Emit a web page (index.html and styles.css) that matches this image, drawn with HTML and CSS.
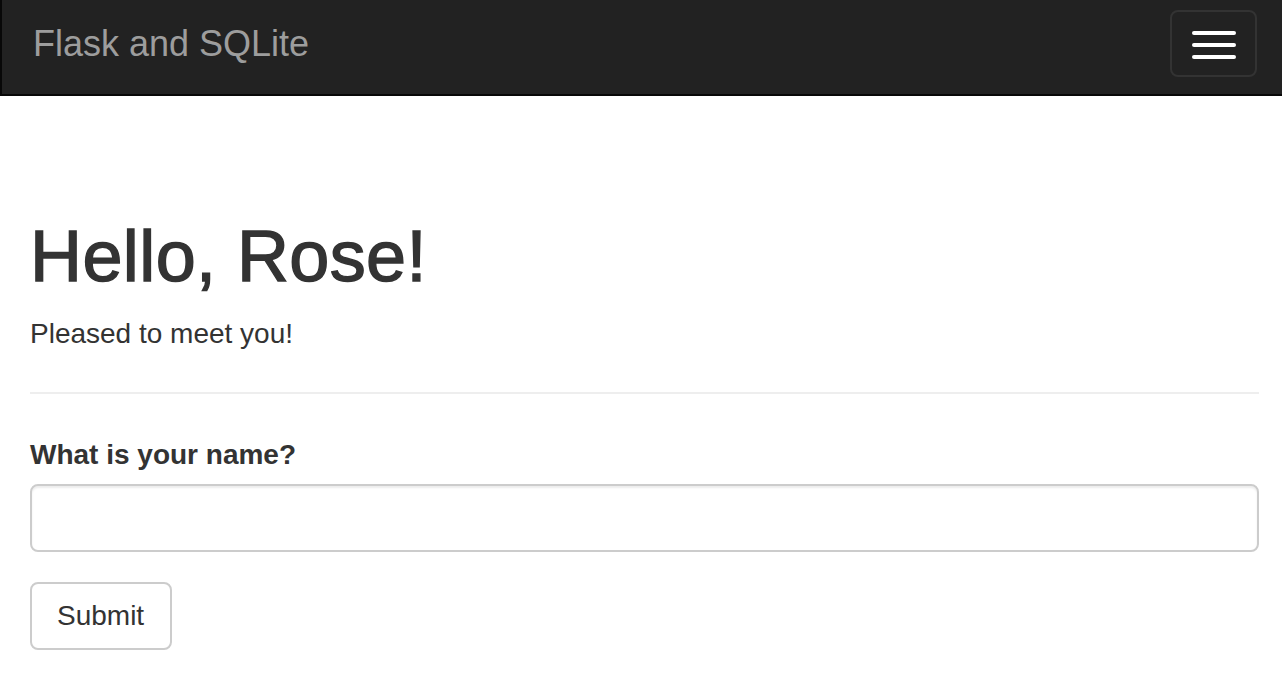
FILE: index.html
```html
<!DOCTYPE html>
<html lang="en">
<head>
    <meta charset="UTF-8">
    <meta name="viewport" content="width=device-width, initial-scale=1.0">
    <title>Flask and SQLite</title>
    <link rel="stylesheet" href="styles.css">
</head>
<body>

    <nav class="navbar">
        <a class="navbar-brand" href="#">Flask and SQLite</a>
        <button class="navbar-toggle" type="button">
            <span class="icon-bar"></span>
            <span class="icon-bar"></span>
            <span class="icon-bar"></span>
        </button>
    </nav>

    <div class="container">
        <div class="page-header">
            <h1>Hello, Rose!</h1>
            <p>Pleased to meet you!</p>
        </div>

        <form class="form">
            <div class="form-group">
                <label for="name">What is your name?</label>
                <input type="text" id="name" class="form-control">
            </div>
            <button type="submit" class="btn">Submit</button>
        </form>
    </div>

</body>
</html>
```

FILE: styles.css
```css
* {
    margin: 0;
    padding: 0;
    box-sizing: border-box;
}
body {
    font-family: 'Liberation Sans', Arial, sans-serif;
    font-size: 28px;
    line-height: 40px;
    color: #333;
    background: #fff;
}
.navbar {
    display: flex;
    justify-content: space-between;
    align-items: flex-start;
    height: 96px;
    background-color: #222;
    border-left: 2px solid #080808;
    border-bottom: 2px solid #080808;
    padding: 0 25px 0 31px;
}
.navbar-brand {
    color: #9d9d9d;
    font-size: 36px;
    line-height: 40px;
    text-decoration: none;
    padding-top: 24px;
}
.navbar-toggle {
    display: flex;
    flex-direction: column;
    gap: 8px;
    margin-top: 10px;
    width: 87px;
    height: 67px;
    padding: 19px 19px 0 20px;
    background: transparent;
    border: 2px solid #333;
    border-radius: 8px;
    cursor: pointer;
}
.icon-bar {
    display: block;
    width: 44px;
    height: 4px;
    background-color: #fff;
    border-radius: 2px;
}
.container {
    padding: 121px 23px 0 30px;
}
h1 {
    font-size: 72px;
    font-weight: 500;
    line-height: 1.1;
    letter-spacing: 0.4px;
    -webkit-text-stroke: 1.4px #333;
    margin-bottom: 18px;
}
.page-header {
    border-bottom: 2px solid #eee;
    padding-bottom: 38px;
    margin-bottom: 41px;
}
label {
    display: block;
    font-weight: bold;
    margin-bottom: 9px;
}
.form-group {
    margin-bottom: 30px;
}
.form-control {
    display: block;
    width: 100%;
    height: 68px;
    padding: 12px 24px;
    font-family: inherit;
    font-size: 28px;
    color: #555;
    border: 2px solid #ccc;
    border-radius: 8px;
    box-shadow: inset 0 2px 2px rgba(0, 0, 0, 0.075);
    outline: none;
}
.btn {
    font-family: inherit;
    font-size: 28px;
    line-height: 40px;
    color: #333;
    background-color: #fff;
    border: 2px solid #ccc;
    border-radius: 8px;
    padding: 12px 26px 12px 25px;
    cursor: pointer;
}
```
